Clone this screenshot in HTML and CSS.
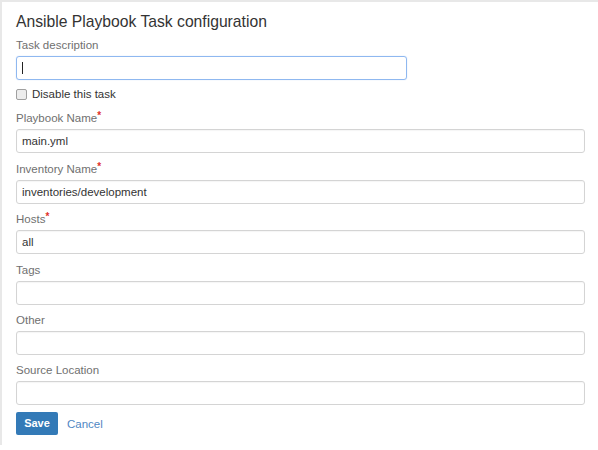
FILE: index.html
```html
<!DOCTYPE html>
<html>
<head>
<meta charset="utf-8">
<link rel="stylesheet" href="styles.css">
</head>
<body>
<div class="panel">
  <h1 class="title">Ansible Playbook Task configuration</h1>
  <form class="form">
    <div class="group">
      <label class="label">Task description</label>
      <div class="input short focused"><span class="caret"></span></div>
    </div>
    <div class="check-row">
      <span class="checkbox"></span>
      <span class="check-label">Disable this task</span>
    </div>
    <div class="group first">
      <label class="label">Playbook Name<span class="req">*</span></label>
      <div class="input">main.yml</div>
    </div>
    <div class="group">
      <label class="label">Inventory Name<span class="req">*</span></label>
      <div class="input">inventories/development</div>
    </div>
    <div class="group">
      <label class="label">Hosts<span class="req">*</span></label>
      <div class="input">all</div>
    </div>
    <div class="group">
      <label class="label">Tags</label>
      <div class="input"></div>
    </div>
    <div class="group">
      <label class="label">Other</label>
      <div class="input"></div>
    </div>
    <div class="group">
      <label class="label">Source Location</label>
      <div class="input"></div>
    </div>
    <div class="actions">
      <span class="btn">Save</span>
      <span class="link">Cancel</span>
    </div>
  </form>
</div>
</body>
</html>
```
FILE: styles.css
```css
html, body {
  margin: 0;
  padding: 0;
  background: #fff;
}
body {
  font-family: "Liberation Sans", Arial, sans-serif;
  color: #333;
}
.panel {
  width: 583px;
  height: 443px;
  border-top: 2px solid #e8e8e8;
  border-left: 2px solid #e8e8e8;
  padding-left: 14px;
  box-sizing: content-box;
}
.title {
  margin: 0;
  padding-top: 11px;
  font-size: 15.7px;
  font-weight: normal;
  line-height: 17px;
  color: #333;
}
.form {
  display: flex;
  flex-direction: column;
  width: 569px;
}
.group {
  display: flex;
  flex-direction: column;
  margin-top: 6.4px;
}
.group.first {
  margin-top: 8px;
}
.label {
  font-size: 11.5px;
  line-height: 16px;
  padding-top: 1px;
  color: #707070;
  margin-bottom: 3px;
}
.req {
  color: #e0312b;
  font-size: 10px;
  font-weight: bold;
  vertical-align: top;
  position: relative;
  top: -2px;
}
.input {
  height: 22px;
  border: 1px solid #d4d4d4;
  border-radius: 3px;
  font-size: 11.5px;
  line-height: 22px;
  padding: 0 5px;
  color: #333;
  box-shadow: inset 0 1px 1px rgba(0,0,0,0.04);
}
.short {
  width: 379px;
}
.focused {
  border-color: #8fb8f0;
  box-shadow: 0 0 1px #a9c9f5;
  display: flex;
  align-items: center;
}
.caret {
  display: block;
  width: 1px;
  height: 12px;
  background: #222;
}
.check-row {
  display: flex;
  align-items: center;
  margin-top: 7px;
  gap: 5px;
}
.checkbox {
  width: 9px;
  height: 9px;
  border: 1px solid #a0a0a0;
  border-radius: 2px;
  background: #ededed;
}
.check-label {
  font-size: 11.5px;
  line-height: 14px;
  color: #333;
}
.actions {
  display: flex;
  align-items: center;
  margin-top: 7px;
  gap: 9px;
}
.btn {
  background: #337ab7;
  color: #fff;
  font-weight: bold;
  font-size: 11px;
  width: 42px;
  height: 23px;
  line-height: 23px;
  text-align: center;
  border-radius: 2px;
}
.link {
  color: #4f87c3;
  font-size: 11.5px;
}
```
